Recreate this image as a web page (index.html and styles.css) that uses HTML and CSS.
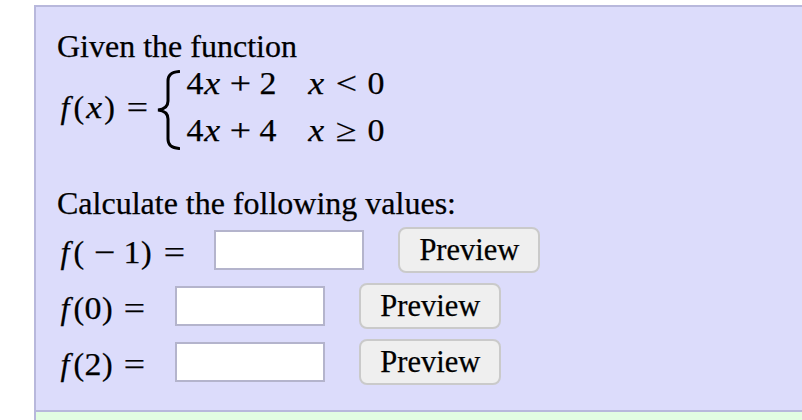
FILE: index.html
```html
<!DOCTYPE html>
<html>
<head>
<meta charset="utf-8">
<link rel="stylesheet" href="styles.css">
</head>
<body>
<div class="problem">
  <p class="intro">Given the function</p>
  <div class="piecewise">
    <span class="math lhs"><span class="g g-f">f</span><span class="g g-paren">(</span><span class="g g-x">x</span><span class="g g-paren">)</span><span class="g g-rel">=</span></span>
    <svg class="brace" viewBox="0 0 24 80" width="24" height="80" aria-hidden="true">
      <path d="M23 1.5 C15 2.2 12 5 12 11 L12 31 C12 36 9 39.2 2 40 C9 40.8 12 44 12 49 L12 69 C12 75 15 77.8 23 78.5" fill="none" stroke="#000" stroke-width="3" stroke-linecap="round"/>
    </svg>
    <div class="cases">
      <span class="math"><span class="g g-d">4</span><span class="g g-x">x</span><span class="g g-bin">+</span><span class="g g-d">2</span></span>
      <span class="math"><span class="g g-x">x</span><span class="g g-rel">&lt;</span><span class="g g-d">0</span></span>
      <span class="math"><span class="g g-d">4</span><span class="g g-x">x</span><span class="g g-bin">+</span><span class="g g-d">4</span></span>
      <span class="math"><span class="g g-x">x</span><span class="g g-rel">≥</span><span class="g g-d">0</span></span>
    </div>
  </div>
  <p class="prompt">Calculate the following values:</p>
  <div class="answer-row first">
    <span class="math label"><span class="g g-f">f</span><span class="g g-paren">(</span><span class="g g-bin">−</span><span class="g g-d">1</span><span class="g g-paren">)</span><span class="g g-rel">=</span></span>
    <input class="answer" type="text">
    <button class="preview" type="button">Preview</button>
  </div>
  <div class="answer-row">
    <span class="math label"><span class="g g-f">f</span><span class="g g-paren">(</span><span class="g g-d">0</span><span class="g g-paren">)</span><span class="g g-rel">=</span></span>
    <input class="answer" type="text">
    <button class="preview" type="button">Preview</button>
  </div>
  <div class="answer-row">
    <span class="math label"><span class="g g-f">f</span><span class="g g-paren">(</span><span class="g g-d">2</span><span class="g g-paren">)</span><span class="g g-rel">=</span></span>
    <input class="answer" type="text">
    <button class="preview" type="button">Preview</button>
  </div>
</div>
<div class="feedback"></div>
</body>
</html>
```

FILE: styles.css
```css
html, body {
  margin: 0;
  padding: 0;
  overflow: hidden;
  background: #ffffff;
}

body {
  font-family: "Liberation Serif", "Times New Roman", serif;
  font-size: 32px;
  color: #000;
  -webkit-text-stroke: 0.25px #000;
}

.problem {
  margin: 5px -40px 0 34px;
  border: 2px solid #b8b8dc;
  background: #dcdcfb;
  padding: 21px 20px 20px 21px;
}

.intro,
.prompt {
  margin: 0;
  line-height: 36px;
}

.piecewise {
  display: flex;
  align-items: center;
  margin-top: -1px;
}

.math {
  display: inline-flex;
  align-items: baseline;
  white-space: nowrap;
  line-height: 36px;
}

.g {
  display: inline-block;
  text-align: center;
  font-family: "Liberation Serif", "Times New Roman", serif;
}

.g-f { width: 0.49em; font-style: italic; }
.g-x { width: 0.572em; font-style: italic; transform: scaleX(1.12); }
.g-paren { width: 0.389em; }
.g-d { width: 0.5em; transform: scaleX(1.06); }
.g-rel { width: 0.778em; margin: 0 0.278em; transform: scaleX(1.18); }
.g-bin { width: 0.778em; margin: 0 0.222em; transform: scaleX(1.18); }

.lhs .g-rel,
.label .g-rel { margin-right: 0; }

.brace {
  margin: 7px 0 0 6px;
  flex: none;
}

.cases {
  display: grid;
  grid-template-columns: auto auto;
  column-gap: 31px;
  row-gap: 11px;
  margin-left: 7px;
}

.prompt {
  margin-top: 35px;
}

.answer-row {
  display: flex;
  align-items: center;
  height: 56px;
}

.answer-row.first {
  margin-top: 1px;
}

.label {
  margin-top: 4px;
}

.answer {
  box-sizing: border-box;
  width: 150px;
  height: 40px;
  margin: 0 0 0 28px;
  border: 2px solid #b4b4cc;
  background: #ffffff;
  padding: 0 6px;
  font-size: 28px;
}

.preview {
  box-sizing: border-box;
  height: 46px;
  margin-left: 34px;
  padding: 0 19px;
  border: 2px solid #cacaca;
  border-radius: 8px;
  background: #efefef;
  font-family: "Liberation Serif", "Times New Roman", serif;
  font-size: 30.5px;
  color: #000;
}

.feedback {
  margin: 0 -40px 0 34px;
  border-left: 2px solid #b8b8dc;
  background: #e2fde2;
  height: 10px;
}
```
